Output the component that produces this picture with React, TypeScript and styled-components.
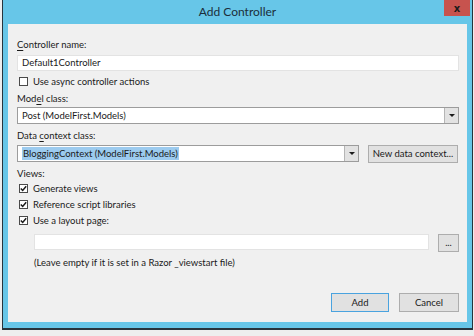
import React from 'react';
import styled, {createGlobalStyle} from 'styled-components';

const GlobalStyle = createGlobalStyle`
  html, body {
    margin: 0;
    padding: 0;
    background: #eeeeee;
  }
  body {
    font-family: Lato, "Open Sans", sans-serif;
    font-size: 9.5px;
    color: #1a1a1a;
  }
`

const Page = styled.div`
  padding-left: 2px;
  width: 474px;
  height: 336px;
  box-sizing: border-box;
  overflow: hidden;
`

const Window = styled.div`
  width: 471px;
  height: 330px;
  box-sizing: border-box;
  background: #67c6e8;
  border: 1px solid #27343d;
  border-top: none;
  border-bottom-width: 2px;
  display: flex;
  flex-direction: column;
`

const TitleBar = styled.div`
  height: 24px;
  display: grid;
  grid-template-columns: 1fr auto 1fr;
  align-items: start;
`

const Title = styled.div`
  grid-column: 2;
  font-size: 12px;
  line-height: 24px;
  color: #1c2e3a;
`

const CloseButton = styled.div`
  grid-column: 3;
  justify-self: end;
  width: 26px;
  height: 16px;
  margin-right: 2px;
  background: #c7534e;
  display: flex;
  align-items: center;
  justify-content: center;
  font-family: "DejaVu Sans", sans-serif;
  font-weight: 700;
  font-size: 10px;
  color: #1b1b1b;
`

const Body = styled.div`
  flex: 1;
  margin: 0 5px 6px 5px;
  background: #f0f0f0;
  padding: 14px 8px 10px 9px;
  display: flex;
  flex-direction: column;
`

const Label = styled.div<{ $gap?: number }>`
  height: 14px;
  line-height: 14px;
  margin-top: ${p => p.$gap ?? 0}px;

  u {
    text-decoration-thickness: 1px;
    text-underline-offset: 2px;
  }
`

const TextInput = styled.div`
  height: 16px;
  flex: 1;
  box-sizing: border-box;
  background: #ffffff;
  border: 1px solid #e3e3e3;
  line-height: 14px;
  padding-left: 4px;
`

const Row = styled.div<{ $gap?: number; $indent?: number }>`
  display: flex;
  align-items: flex-start;
  gap: 9px;
  margin-top: ${p => p.$gap ?? 0}px;
  padding-left: ${p => p.$indent ?? 0}px;
`

const Select = styled.div<{ $width?: number }>`
  height: 17px;
  box-sizing: border-box;
  width: ${p => (p.$width ? `${p.$width}px` : '100%')};
  background: #ffffff;
  border: 1px solid #9c9c9c;
  display: flex;
`

const SelectValue = styled.div`
  flex: 1;
  padding-left: 4px;
  line-height: 15px;
`

const Highlight = styled.span`
  background: #9ccbef;
  padding: 1px 1px;
`

const DropButton = styled.div`
  width: 13px;
  background: #e2e2e2;
  border-left: 1px solid #b5b5b5;
  display: flex;
  align-items: center;
  justify-content: center;

  &::after {
    content: "";
    border-left: 3px solid transparent;
    border-right: 3px solid transparent;
    border-top: 3px solid #1b1b1b;
  }
`

const Button = styled.div<{ $width: number; $height?: number; $default?: boolean }>`
  width: ${p => p.$width}px;
  height: ${p => p.$height ?? 19}px;
  box-sizing: border-box;
  background: #e1e1e1;
  border: 1px solid ${p => (p.$default ? '#4aa3df' : '#adadad')};
  display: flex;
  align-items: center;
  justify-content: center;
  white-space: nowrap;
  flex-shrink: 0;
  line-height: 1;
`

const CheckRow = styled.label<{ $gap?: number }>`
  display: flex;
  align-items: center;
  gap: 5px;
  height: 14px;
  margin-top: ${p => p.$gap ?? 0}px;
  padding-left: 2px;
`

const Box = styled.span`
  width: 9px;
  height: 9px;
  box-sizing: border-box;
  border: 1px solid #4a4a4a;
  background: #ffffff;
  display: flex;
  align-items: center;
  justify-content: center;
`

const Hint = styled.div`
  margin-top: 4px;
  padding-left: 17px;
  height: 14px;
  line-height: 14px;
`

const Footer = styled.div`
  margin-top: auto;
  display: flex;
  justify-content: flex-end;
  gap: 10px;
`

const Check = ({checked}: { checked?: boolean }) => (
    <Box>
        {checked && (
            <svg width="7" height="7" viewBox="0 0 7 7">
                <path d="M0.8 3.4 L2.7 5.4 L6.2 1.2" fill="none" stroke="#1a1a1a" strokeWidth="1.5"/>
            </svg>
        )}
    </Box>
)

export default function App() {
    return (
        <Page>
            <GlobalStyle/>
            <Window>
                <TitleBar>
                    <Title>Add Controller</Title>
                    <CloseButton>x</CloseButton>
                </TitleBar>
                <Body>
                    <Label><u>C</u>ontroller name:</Label>
                    <Row $gap={3}>
                        <TextInput>Default1Controller</TextInput>
                    </Row>
                    <CheckRow $gap={3}>
                        <Check/>
                        Use async controller actions
                    </CheckRow>
                    <Label $gap={4}>Mod<u>e</u>l class:</Label>
                    <Row $gap={1}>
                        <Select>
                            <SelectValue>Post (ModelFirst.Models)</SelectValue>
                            <DropButton/>
                        </Select>
                    </Row>
                    <Label $gap={5}>Data <u>c</u>ontext class:</Label>
                    <Row $gap={2}>
                        <Select $width={342}>
                            <SelectValue><Highlight>BloggingContext (ModelFirst.Models)</Highlight></SelectValue>
                            <DropButton/>
                        </Select>
                        <Button $width={90} $height={18}>New data context...</Button>
                    </Row>
                    <Label $gap={4}>Views:</Label>
                    <CheckRow>
                        <Check checked/>
                        Generate views
                    </CheckRow>
                    <CheckRow $gap={2}>
                        <Check checked/>
                        Reference script libraries
                    </CheckRow>
                    <CheckRow $gap={2}>
                        <Check checked/>
                        Use a layout page:
                    </CheckRow>
                    <Row $gap={7} $indent={17}>
                        <TextInput/>
                        <Button $width={21} $height={18}>...</Button>
                    </Row>
                    <Hint>(Leave empty if it is set in a Razor _viewstart file)</Hint>
                    <Footer>
                        <Button $width={58} $default>Add</Button>
                        <Button $width={60}>Cancel</Button>
                    </Footer>
                </Body>
            </Window>
        </Page>
    );
}
